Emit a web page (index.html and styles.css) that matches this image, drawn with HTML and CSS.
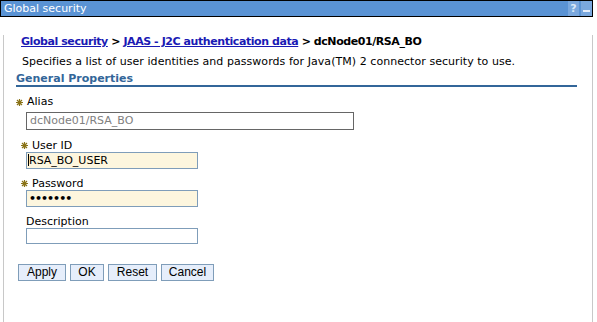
FILE: index.html
```html
<!DOCTYPE html>
<html>
<head>
<meta charset="utf-8">
<link rel="stylesheet" href="styles.css">
</head>
<body>
<div class="titlebar">
  <span class="title">Global security</span>
  <span class="tools">
    <span class="tbtn">?</span>
    <span class="tbtn min"><span class="dash"></span></span>
  </span>
</div>
<div class="panel">
  <div class="crumbs">
    <a href="#">Global security</a> &gt; <a href="#">JAAS - J2C authentication data</a> &gt; dcNode01/RSA_BO
  </div>
  <div class="desc">Specifies a list of user identities and passwords for Java(TM) 2 connector security to use.</div>
  <div class="section">General Properties</div>
  <div class="field alias">
    <div class="label"><svg class="req" width="7" height="7" viewBox="0 0 7 7"><path d="M3.5 0V7M0 3.5H7M1 1L6 6M6 1L1 6" stroke="#8a7318" stroke-width="1.2"/></svg>Alias</div>
    <div class="input ro">dcNode01/RSA_BO</div>
  </div>
  <div class="field">
    <div class="label ind"><svg class="req" width="7" height="7" viewBox="0 0 7 7"><path d="M3.5 0V7M0 3.5H7M1 1L6 6M6 1L1 6" stroke="#8a7318" stroke-width="1.2"/></svg>User ID</div>
    <div class="input req-in"><span class="caret"></span>RSA_BO_USER</div>
  </div>
  <div class="field tight">
    <div class="label ind"><svg class="req" width="7" height="7" viewBox="0 0 7 7"><path d="M3.5 0V7M0 3.5H7M1 1L6 6M6 1L1 6" stroke="#8a7318" stroke-width="1.2"/></svg>Password</div>
    <div class="input req-in pw">&#8226;&#8226;&#8226;&#8226;&#8226;&#8226;&#8226;</div>
  </div>
  <div class="field tight">
    <div class="label plain">Description</div>
    <div class="input plain-in"></div>
  </div>
  <div class="buttons">
    <button class="btn b-apply">Apply</button>
    <button class="btn b-ok">OK</button>
    <button class="btn b-reset">Reset</button>
    <button class="btn b-cancel">Cancel</button>
  </div>
</div>
</body>
</html>
```
FILE: styles.css
```css
html, body {
  margin: 0;
  padding: 0;
  background: #fff;
}
body {
  font-family: "DejaVu Sans", Verdana, sans-serif;
  font-size: 11px;
  color: #000;
  width: 597px;
  height: 322px;
  overflow: hidden;
}
.titlebar {
  width: 591px;
  height: 15px;
  border: 1px solid #000;
  background: #5a93d4;
  display: flex;
  justify-content: space-between;
  align-items: center;
}
.title {
  color: #fff;
  padding-left: 3px;
  line-height: 15px;
}
.tools {
  display: flex;
  gap: 2px;
  height: 15px;
}
.tbtn {
  width: 11px;
  height: 15px;
  background: #7aa8de;
  color: #dbe8f7;
  font-weight: bold;
  font-size: 11px;
  line-height: 16px;
  text-align: center;
}
.tbtn.min {
  display: flex;
  align-items: flex-end;
  justify-content: center;
}
.dash {
  width: 7px;
  height: 2px;
  background: #e6eefa;
  margin-bottom: 4px;
}
.panel {
  margin-left: 3px;
  width: 588px;
  height: 299px;
  border: 1px solid #c8c8c8;
  border-top: none;
}
.crumbs {
  font-weight: bold;
  padding-left: 17px;
  margin-top: 18px;
  line-height: 14px;
  white-space: nowrap;
  letter-spacing: -0.43px;
}
.crumbs a {
  color: #1a1ab4;
  text-decoration: underline;
}
.desc {
  padding-left: 18px;
  margin-top: 6px;
  line-height: 14px;
  white-space: nowrap;
  letter-spacing: 0.05px;
}
.section {
  margin-left: 12px;
  width: 561px;
  margin-top: 3px;
  font-weight: bold;
  color: #336699;
  line-height: 13px;
  border-bottom: 2px solid #336699;
}
.field {
  margin-left: 22px;
}
.label {
  line-height: 13px;
  display: flex;
  align-items: center;
}
.req {
  margin-right: 4px;
}
.label.ind .req {
  margin-left: -5px;
}
.alias {
  margin-top: 8px;
}
.alias .label {
  line-height: 14px;
}
.alias .req {
  margin-left: -10px;
}
.input {
  box-sizing: border-box;
  height: 17px;
  line-height: 15px;
  padding-left: 3px;
  white-space: nowrap;
}
.ro {
  width: 328px;
  height: 18px;
  margin-top: 3px;
  border: 1px solid #666;
  color: #808080;
  line-height: 16px;
}
.req-in {
  width: 172px;
  margin-top: 0;
  border: 1px solid #7f9db9;
  background: #fdf6de;
  padding-left: 1px;
}
.caret {
  display: inline-block;
  width: 1px;
  height: 12px;
  background: #000;
  vertical-align: -2px;
}
.pw {
  font-weight: bold;
  letter-spacing: -1px;
  padding-left: 2px;
}
.field + .field {
  margin-top: 9px;
}
.field + .field.tight {
  margin-top: 8px;
}
.plain-in {
  width: 172px;
  height: 16px;
  margin-top: 0;
  border: 1px solid #7f9db9;
  background: #fff;
}
.buttons {
  display: flex;
  gap: 4px;
  margin-left: 14px;
  margin-top: 20px;
}
.btn {
  box-sizing: border-box;
  height: 17px;
  padding: 0;
  border: 1px solid #7f9db9;
  background: #e6eefb;
  font-family: "Liberation Sans", Arial, sans-serif;
  font-size: 12px;
  color: #000;
  line-height: 15px;
}
.b-apply { width: 48px; }
.b-ok { width: 34px; }
.b-reset { width: 49px; }
.b-cancel { width: 53px; }
```
